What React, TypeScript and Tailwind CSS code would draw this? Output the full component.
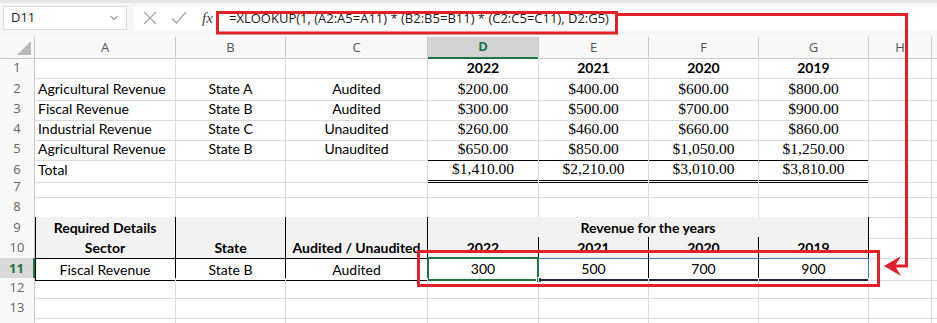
import { ChevronDown } from 'lucide-react'
import { twMerge } from 'tailwind-merge'

const GRID = 'grid grid-cols-[35px_141px_110px_142px_111px_110px_110px_110px_63px_1fr]'

type CellDef = { t?: string; c?: string; sel?: boolean }

const YR = 'justify-center font-bold'
const CT = 'justify-center'
const MONEY = "justify-center font-['Liberation_Serif',serif] text-[15.5px]"
const GRAY = 'bg-[#f2f2f2] border-r-black border-b-black'
const LEFT = 'shadow-[inset_1px_0_0_#000]'
const NAVY = 'border-b-2 border-b-[#1f2a40]'

const e = (c = ''): CellDef => ({ t: '', c })

const rows: { n: number; h?: string; cells: CellDef[] }[] = [
  { n: 1, cells: [e(), e(), e(), { t: '2022', c: YR }, { t: '2021', c: YR }, { t: '2020', c: YR }, { t: '2019', c: YR }, e()] },
  {
    n: 2,
    cells: [
      { t: 'Agricultural Revenue' }, { t: 'State A', c: CT }, { t: 'Audited', c: CT },
      { t: '$200.00', c: MONEY }, { t: '$400.00', c: MONEY }, { t: '$600.00', c: MONEY }, { t: '$800.00', c: MONEY }, e(),
    ],
  },
  {
    n: 3,
    cells: [
      { t: 'Fiscal Revenue' }, { t: 'State B', c: CT }, { t: 'Audited', c: CT },
      { t: '$300.00', c: MONEY }, { t: '$500.00', c: MONEY }, { t: '$700.00', c: MONEY }, { t: '$900.00', c: MONEY }, e(),
    ],
  },
  {
    n: 4,
    cells: [
      { t: 'Industrial Revenue' }, { t: 'State C', c: CT }, { t: 'Unaudited', c: CT },
      { t: '$260.00', c: MONEY }, { t: '$460.00', c: MONEY }, { t: '$660.00', c: MONEY }, { t: '$860.00', c: MONEY }, e(),
    ],
  },
  {
    n: 5,
    cells: [
      { t: 'Agricultural Revenue' }, { t: 'State B', c: CT }, { t: 'Unaudited', c: CT },
      { t: '$650.00', c: MONEY + ' border-b-black' }, { t: '$850.00', c: MONEY + ' border-b-black' },
      { t: '$1,050.00', c: MONEY + ' border-b-black' }, { t: '$1,250.00', c: MONEY + ' border-b-black' }, e(),
    ],
  },
  {
    n: 6,
    cells: [
      { t: 'Total' }, e(), e(),
      { t: '$1,410.00', c: MONEY + ' border-double border-b-[3px] border-b-black' },
      { t: '$2,210.00', c: MONEY + ' border-double border-b-[3px] border-b-black' },
      { t: '$3,010.00', c: MONEY + ' border-double border-b-[3px] border-b-black' },
      { t: '$3,810.00', c: MONEY + ' border-double border-b-[3px] border-b-black' }, e(),
    ],
  },
  { n: 7, cells: [e(), e(), e(), e(), e(), e(), e(), e()] },
  {
    n: 8,
    cells: [
      e('border-b-black'), e('border-b-black'), e('border-b-black'), e('border-b-black'),
      e('border-b-black'), e('border-b-black'), e('border-b-black'), e(),
    ],
  },
  {
    n: 9,
    cells: [
      { t: 'Required Details', c: `justify-center font-bold ${GRAY} ${LEFT}` },
      e(GRAY), e(GRAY),
      { t: 'Revenue for the years', c: `col-span-4 justify-center font-bold ${GRAY}` }, e(),
    ],
  },
  {
    n: 10,
    h: 'h-[21px]',
    cells: [
      { t: 'Sector', c: `justify-center font-bold ${GRAY} ${LEFT}` },
      { t: 'State', c: `justify-center font-bold ${GRAY}` },
      { t: 'Audited / Unaudited', c: `justify-center font-bold ${GRAY}` },
      { t: '2022', c: `justify-center font-bold ${GRAY}` },
      { t: '2021', c: `justify-center font-bold ${GRAY} border-b-[#4a72b5]` },
      { t: '2020', c: `justify-center font-bold ${GRAY} border-b-[#4a72b5]` },
      { t: '2019', c: `justify-center font-bold ${GRAY} border-b-[#4a72b5]` }, e(),
    ],
  },
  {
    n: 11,
    cells: [
      { t: 'Fiscal Revenue', c: `justify-center border-r-black border-b-black ${LEFT}` },
      { t: 'State B', c: 'justify-center border-r-black border-b-black' },
      { t: 'Audited', c: 'justify-center border-r-black border-b-black' },
      { t: '300', c: `justify-center border-r-black ${NAVY}`, sel: true },
      { t: '500', c: `justify-center border-r-black ${NAVY}` },
      { t: '700', c: `justify-center border-r-black ${NAVY}` },
      { t: '900', c: `justify-center border-r-[#4a72b5] ${NAVY}` }, e(),
    ],
  },
  { n: 12, cells: [e(), e(), e(), e(), e(), e(), e(), e()] },
  { n: 13, cells: [e(), e(), e(), e(), e(), e(), e(), e()] },
  // only a sliver of row 14 shows, so no number is drawn
  { n: 0, cells: [e(), e(), e(), e(), e(), e(), e(), e()] },
]

function Cell({ def }: { def: CellDef }) {
  return (
    <div
      className={twMerge(
        'relative flex items-center whitespace-nowrap border-r border-b border-[#dadada] px-[3px] text-[14px] text-black',
        def.c
      )}
    >
      {def.t}
      {def.sel && (
        <>
          <div className="pointer-events-none absolute -left-px -top-px -right-px -bottom-[2px] border-2 border-[#217346]" />
          <div className="absolute -right-[4px] -bottom-[4px] h-[6px] w-[6px] border border-white bg-[#217346]" />
        </>
      )}
    </div>
  )
}

function RowHead({ n }: { n: number }) {
  const active = n === 11
  return (
    <div
      className={`flex items-center justify-center border-b border-[#dadada] font-['Open_Sans',sans-serif] text-[13px] ${
        active
          ? 'border-r-2 border-r-[#217346] bg-[#d9d9d9] font-bold text-[#217346]'
          : 'border-r border-r-[#c8c8c8] bg-[#f8f8f8] text-[#666]'
      }`}
    >
      {n > 0 ? n : ''}
    </div>
  )
}

const COLS = ['A', 'B', 'C', 'D', 'E', 'F', 'G', 'H']

function FormulaBar() {
  return (
    <div className="flex h-[37px] items-start border-t-[3px] border-[#e6e6e6] bg-[#f7f7f7] pt-[3px] font-['Open_Sans',sans-serif] text-[13px] text-[#222]">
      <div className="ml-[3px] flex h-6 w-[124px] items-center justify-between border border-[#dadada] bg-white pl-[7px] pr-[6px]">
        <span>D11</span>
        <ChevronDown className="h-3 w-3 text-[#555]" strokeWidth={2} />
      </div>
      <div className="ml-[7px] flex h-6 w-[82px] items-center bg-white">
        <svg width="14" height="14" viewBox="0 0 14 14" className="ml-[9px]">
          <path d="M1 1L13 13M13 1L1 13" stroke="#a6a6a6" strokeWidth="1.2" />
        </svg>
        <svg width="16" height="14" viewBox="0 0 16 14" className="ml-[14px]">
          <path d="M1 7.5L5.5 12L15 1" stroke="#a6a6a6" strokeWidth="1.2" fill="none" />
        </svg>
        <span className="ml-[15px] font-['Liberation_Serif',serif] text-[15px] italic text-[#444]">fx</span>
      </div>
      <div className="flex h-6 flex-1 items-center bg-white pl-[13px] pt-px">
        =XLOOKUP(1, (A2:A5=A11) * (B2:B5=B11) * (C2:C5=C11), D2:G5)
      </div>
    </div>
  )
}

export default function App() {
  return (
    <div className="relative h-[323px] w-[937px] overflow-hidden bg-white">
      <FormulaBar />
      <div className="font-['Lato',sans-serif]">
        <div className={twMerge(GRID, 'h-5')}>
          <div className="relative border-r border-b border-[#c8c8c8] bg-[#f8f8f8]">
            <div className="absolute right-[3px] bottom-[3px] h-0 w-0 border-t-[14px] border-l-[14px] border-t-transparent border-l-transparent border-b-0 border-r-[14px] border-r-[#b8b8b8] [border-right-width:0] [border-bottom:14px_solid_#b8b8b8]" />
          </div>
          {COLS.map((c) => (
            <div
              key={c}
              className={`flex items-center justify-center font-['Open_Sans',sans-serif] text-[13px] ${
                c === 'D'
                  ? 'border-b-2 border-r border-b-[#217346] border-r-[#c8c8c8] bg-[#d4d4d4] font-bold text-[#217346]'
                  : 'border-r border-b border-[#c8c8c8] bg-[#f8f8f8] text-[#555]'
              }`}
            >
              {c}
            </div>
          ))}
          <div className="border-b border-[#c8c8c8] bg-[#f8f8f8]" />
        </div>
        {rows.map((r, idx) => (
          <div key={idx} className={twMerge(GRID, 'h-5', r.h)}>
            <RowHead n={r.n} />
            {r.cells.map((c, i) => (
              <Cell key={i} def={c} />
            ))}
            <div className="border-b border-[#dadada]" />
          </div>
        ))}
      </div>

      {/* red callout drawn over the sheet */}
      <svg className="pointer-events-none absolute inset-0" width="937" height="323" viewBox="0 0 937 323">
        <rect x="217.5" y="12.5" width="399" height="20.5" fill="none" stroke="#e0202b" strokeWidth="3" />
        <polyline points="617,14.5 906.5,14.5 906.5,266 893,266" fill="none" stroke="#e0202b" strokeWidth="3" />
        <polygon points="884,266 901,256 895,266 901,276" fill="#e0202b" />
        <rect x="418.5" y="251.5" width="460" height="34" fill="none" stroke="#e0202b" strokeWidth="3" />
      </svg>
    </div>
  )
}
